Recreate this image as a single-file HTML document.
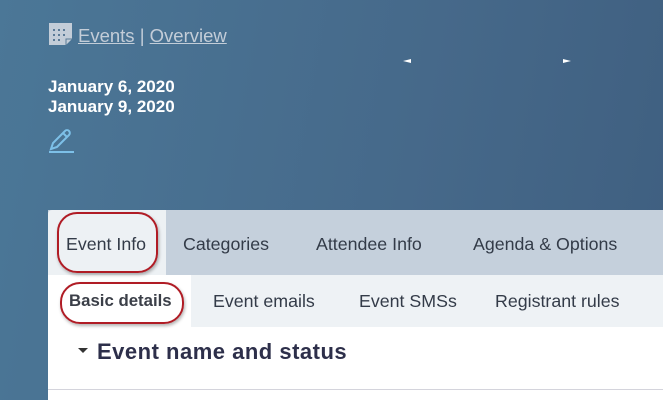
<!DOCTYPE html>
<html><head><style>
body{margin:0;width:663px;height:400px;overflow:hidden;background:linear-gradient(100deg,#4b7797 0%,#46698a 60%,#3f5f80 100%);font-family:"Liberation Sans",sans-serif;position:relative}
.a{position:absolute;white-space:nowrap}
.crumb{left:78px;top:25px;color:#c3cdd8;font-size:18.5px}
.crumb u{text-decoration:underline}
.date{left:48px;color:#fff;font-weight:bold;font-size:17px}
.tabs{left:48px;top:210px;width:615px;height:65px;background:#c5d0dc}
.sub{left:48px;top:275px;width:615px;height:52px;background:#eef2f5}
.content{left:48px;top:327px;width:615px;height:73px;background:#fff}
.t{font-size:17.8px;color:#333b48}
.oval{position:absolute;border:2px solid #b01c25;border-radius:20px;box-shadow:1px 2px 3px rgba(0,0,0,.3)}
</style></head><body>
<svg class="a" style="left:48px;top:22px" width="25" height="24" viewBox="0 0 25 24"><path d="M1 1h23v16l-6 6H1z" fill="#c3cdd8"/><g fill="#5a7a96"><rect x="5" y="7" width="2" height="2"/><rect x="10" y="7" width="2" height="2"/><rect x="15" y="7" width="2" height="2"/><rect x="5" y="12" width="2" height="2"/><rect x="10" y="12" width="2" height="2"/><rect x="15" y="12" width="2" height="2"/><rect x="5" y="17" width="2" height="2"/><rect x="10" y="17" width="2" height="2"/></g><path d="M18 23v-6h6" fill="none" stroke="#5a7a96" stroke-width="1"/></svg>
<div class="a crumb"><u>Events</u> | <u>Overview</u></div>
<div class="a date" style="top:77px">January 6, 2020</div>
<div class="a date" style="top:97px">January 9, 2020</div>
<svg class="a" style="left:48px;top:128px" width="26" height="26" viewBox="0 0 26 26"><path d="M3 21l2-6L17 3a2.5 2.5 0 0 1 4 4L9 19z M15 5l4 4" fill="none" stroke="#7dc0e8" stroke-width="2"/><path d="M1 24h25" stroke="#7dc0e8" stroke-width="2"/></svg>
<div class="a" style="left:403px;top:59px;width:0;height:0;border-right:8px solid #fff;border-top:2px solid transparent;border-bottom:2px solid transparent"></div>
<div class="a" style="left:563px;top:59px;width:0;height:0;border-left:8px solid #fff;border-top:2px solid transparent;border-bottom:2px solid transparent"></div>
<div class="a tabs"></div>
<div class="a" style="left:48px;top:210px;width:118px;height:65px;background:#edf1f4;border-radius:4px 0 0 0"></div>
<div class="a sub"></div>
<div class="a" style="left:48px;top:275px;width:143px;height:52px;background:#fff"></div>
<div class="a content"></div>
<div class="a" style="left:48px;top:389px;width:615px;height:1px;background:#d4d4dc"></div>
<div class="a t" style="left:66px;top:234px">Event Info</div>
<div class="a t" style="left:183px;top:234px">Categories</div>
<div class="a t" style="left:316px;top:234px">Attendee Info</div>
<div class="a t" style="left:473px;top:234px">Agenda &amp; Options</div>
<div class="a t" style="left:69px;top:291px;font-weight:bold;color:#3b3f48;font-size:16.8px">Basic details</div>
<div class="a t" style="left:213px;top:291px">Event emails</div>
<div class="a t" style="left:359px;top:291px">Event SMSs</div>
<div class="a t" style="left:495px;top:291px">Registrant rules</div>
<div class="oval" style="left:57px;top:212px;width:97px;height:57px"></div>
<div class="oval" style="left:60px;top:282px;width:120px;height:38px"></div>
<div class="a" style="left:78px;top:348px;width:0;height:0;border-top:5px solid #333;border-left:5px solid transparent;border-right:5px solid transparent"></div>
<div class="a" style="left:97px;top:339px;font-size:22px;font-weight:bold;color:#2d2f4a;letter-spacing:0.5px">Event name and status</div>
</body></html>
